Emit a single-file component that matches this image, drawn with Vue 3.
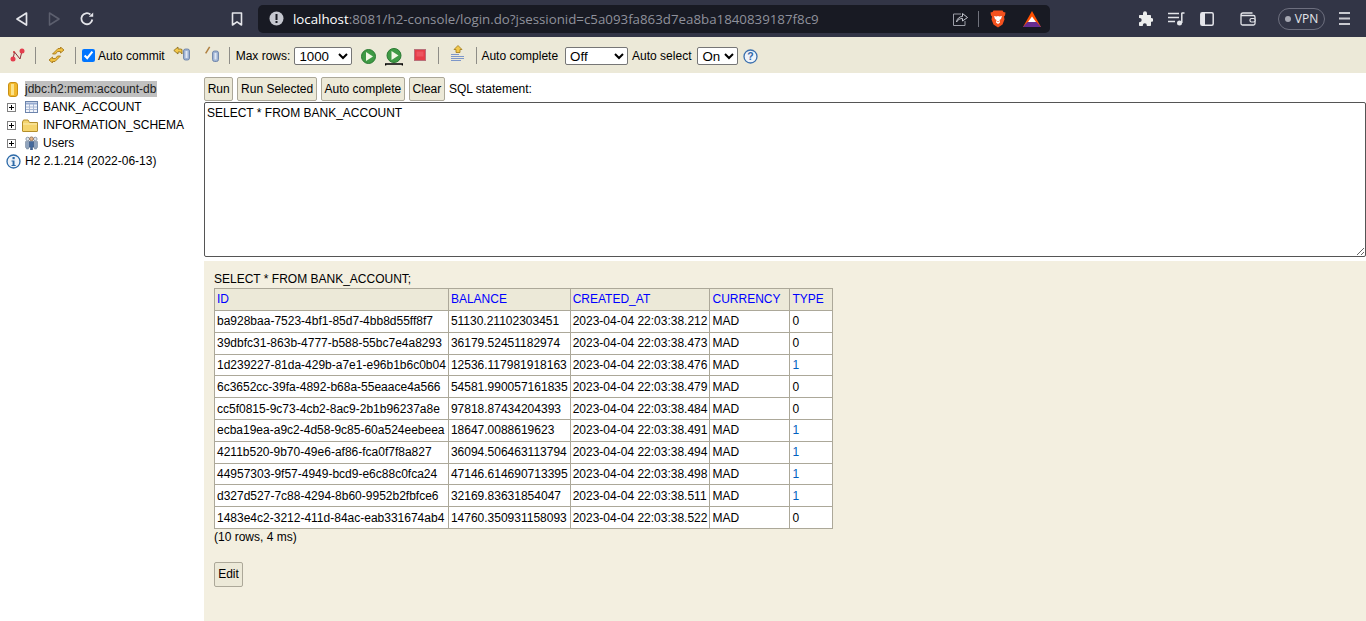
<script setup>
const rows = [
  ['ba928baa-7523-4bf1-85d7-4bb8d55ff8f7', '51130.21102303451', '2023-04-04 22:03:38.212', 'MAD', 0],
  ['39dbfc31-863b-4777-b588-55bc7e4a8293', '36179.52451182974', '2023-04-04 22:03:38.473', 'MAD', 0],
  ['1d239227-81da-429b-a7e1-e96b1b6c0b04', '12536.117981918163', '2023-04-04 22:03:38.476', 'MAD', 1],
  ['6c3652cc-39fa-4892-b68a-55eaace4a566', '54581.990057161835', '2023-04-04 22:03:38.479', 'MAD', 0],
  ['cc5f0815-9c73-4cb2-8ac9-2b1b96237a8e', '97818.87434204393', '2023-04-04 22:03:38.484', 'MAD', 0],
  ['ecba19ea-a9c2-4d58-9c85-60a524eebeea', '18647.0088619623', '2023-04-04 22:03:38.491', 'MAD', 1],
  ['4211b520-9b70-49e6-af86-fca0f7f8a827', '36094.506463113794', '2023-04-04 22:03:38.494', 'MAD', 1],
  ['44957303-9f57-4949-bcd9-e6c88c0fca24', '47146.614690713395', '2023-04-04 22:03:38.498', 'MAD', 1],
  ['d327d527-7c88-4294-8b60-9952b2fbfce6', '32169.83631854047', '2023-04-04 22:03:38.511', 'MAD', 1],
  ['1483e4c2-3212-411d-84ac-eab331674ab4', '14760.350931158093', '2023-04-04 22:03:38.522', 'MAD', 0],
]
const cols = ['ID', 'BALANCE', 'CREATED_AT', 'CURRENCY', 'TYPE']
</script>

<template>
  <div class="page">
    <header class="chrome">
      <svg class="i back" width="14" height="16" viewBox="0 0 14 16"><path d="M11.5 2 2 8l9.500 6z" fill="none" stroke="#e4e5ea" stroke-width="1.700" stroke-linejoin="round"/></svg>
      <svg class="i fwd" width="14" height="16" viewBox="0 0 14 16"><path d="M2.500 2 12 8l-9.500 6z" fill="none" stroke="#5c5f6e" stroke-width="1.500" stroke-linejoin="round"/></svg>
      <svg class="i reload" width="16" height="16" viewBox="0 0 16 16"><path d="M13.300 8.500A5.500 5.500 0 1 1 11.400 3.500" fill="none" stroke="#e4e5ea" stroke-width="1.800"/><path d="M9.800 5.800h4.400V1.400z" fill="#e4e5ea"/></svg>
      <svg class="i mark" width="12" height="14" viewBox="0 0 12 14"><path d="M1.500 1h9v12L6 9.800 1.500 13z" fill="none" stroke="#e4e5ea" stroke-width="1.600" stroke-linejoin="round"/></svg>
      <div class="url">
        <svg width="15" height="15" viewBox="0 0 15 15"><circle cx="7.500" cy="7.500" r="7" fill="#c5c7cf"/><rect x="6.500" y="3" width="2" height="6" fill="#181a23"/><rect x="6.500" y="10" width="2" height="2" fill="#181a23"/></svg>
        <span class="addr"><b>localhost</b>:8081/h2-console/login.do?jsessionid=c5a093fa863d7ea8ba1840839187f8c9</span>
        <svg class="share" width="16" height="16" viewBox="0 0 16 16"><path d="M9 3H1.500v11.500H13V10" fill="none" stroke="#9b9da7" stroke-width="1"/><path d="M4.500 11C5 7.500 7.500 5.500 10.500 5.500V2.500L15.500 6.500 10.500 10V7.500C8 7.500 6 8.500 4.500 11z" fill="#181a23" stroke="#c5c7cf" stroke-width="1" stroke-linejoin="round"/></svg>
        <i class="urlsep"></i>
        <svg class="brave" width="16" height="18" viewBox="0 0 16 18"><path d="M3.500.5h9l1 1.500 2 .5-.5 3-1 1 .5 3-2 5L8 17.500 3.500 14.500l-2-5 .5-3-1-1-.5-3 2-.5z" fill="#f4511e"/><path d="M4 6l2.500.5L8 6l1.500.5L12 6l-1 3-1.500 1L10 12.500 8 14 6 12.500 6.500 10 5 9z" fill="#fff"/><path d="M7 11h2l-1 1.200z" fill="#f4511e"/></svg>
        <svg class="bat" width="18" height="16" viewBox="0 0 18 16"><path d="M9 0 18 16H0z" fill="#ff5000"/><path d="M0 16 4.500 11H13.500L18 16z" fill="#662d91"/><path d="M9 5.500 13 11H5z" fill="#fff"/></svg>
      </div>
      <svg class="i puzzle" width="16" height="16" viewBox="0 0 16 16"><path d="M6 2.200a2 2 0 0 1 4 0V4h3.200a.8.800 0 0 1 .8.800V7h.3a1.900 1.900 0 0 1 0 3.800H14v3.400a.8.800 0 0 1-.8.800H9.800v-.8a2 2 0 0 0-4 0v.8H2.800a.8.800 0 0 1-.8-.8v-3h.6a2.100 2.100 0 0 0 0-4.200H2V4.800A.8.800 0 0 1 2.800 4H6z" fill="#eceded"/></svg>
      <svg class="i list" width="17" height="14" viewBox="0 0 17 14"><path d="M0 1.500h11M0 5.500h11M0 9.500h7" stroke="#e4e5ea" stroke-width="1.500"/><path d="M13.500 1h3M13.800 1v10" stroke="#e4e5ea" stroke-width="1.500" fill="none"/><circle cx="11.500" cy="11" r="2.500" fill="#e4e5ea"/></svg>
      <svg class="i side" width="14" height="14" viewBox="0 0 14 14"><rect x=".8" y=".8" width="12.400" height="12.400" rx="1.500" fill="none" stroke="#e4e5ea" stroke-width="1.500"/><rect x="1" y="1" width="4" height="12" fill="#e4e5ea"/></svg>
      <svg class="i wallet" width="16" height="14" viewBox="0 0 16 14"><path d="M1 3.500V11.500a1.500 1.500 0 0 0 1.500 1.500h11a1.500 1.500 0 0 0 1.500-1.500V5a1.500 1.500 0 0 0-1.500-1.500H1zM1 3a2 2 0 0 1 2-2h9.500" fill="none" stroke="#e4e5ea" stroke-width="1.300"/><rect x="10" y="6.500" width="5" height="3.500" rx="1.500" fill="#323546" stroke="#e4e5ea" stroke-width="1.200"/></svg>
      <div class="vpn"><i></i>VPN</div>
      <svg class="i menu" width="11" height="13" viewBox="0 0 11 13"><path d="M0 1h11M0 6.500h11M0 12h11" stroke="#c9cad0" stroke-width="2"/></svg>
    </header>

    <div class="toolbar">
      <svg class="ti disc" width="15" height="15" viewBox="0 0 15 15"><path d="M3 11 4.500 4 10 11l2-8" fill="none" stroke="#8c2c38" stroke-width="1"/><circle cx="3" cy="11" r="2.500" fill="#e43d4d"/><circle cx="12" cy="3" r="2.500" fill="#e43d4d"/><circle cx="4" cy="4" r="1" fill="#c33"/></svg>
      <i class="sep s1"></i>
      <svg class="ti refresh" width="15" height="16" viewBox="0 0 15 16"><path d="M9 1.500h2.500V0L15 3 11.500 6V4.500H8.500L6.500 7H3.500z" fill="#f0c040" stroke="#a07010" stroke-width=".8"/><path d="M6 14.500H3.500V16L0 13l3.500-3v1.500h3L8.500 9h3z" fill="#f0c040" stroke="#a07010" stroke-width=".8"/></svg>
      <i class="sep s2"></i>
      <input class="chk" type="checkbox" checked />
      <span class="lbl ac">Auto commit</span>
      <svg class="ti rb" width="17" height="15" viewBox="0 0 17 15"><path d="M5 1 .8 4.500 5 8V6h2.500l1.500 2V3.500L7.500 3H5z" fill="#f3c84b" stroke="#8a6a14" stroke-width=".8"/><rect x="10.500" y="3" width="6" height="11" rx="2" fill="#9eb3d3" stroke="#5f79a3" stroke-width=".8"/><rect x="12.500" y="5" width="2" height="7" fill="#dfe7f3"/></svg>
      <svg class="ti cm" width="15" height="16" viewBox="0 0 15 16"><path d="M1 7 5 .5l1.300.8-4 6.500z" fill="#b08040"/><rect x="8.500" y="5" width="6" height="10.500" rx="2" fill="#9eb3d3" stroke="#5f79a3" stroke-width=".8"/><rect x="10.500" y="7" width="2" height="6.500" fill="#dfe7f3"/></svg>
      <i class="sep s3"></i>
      <span class="lbl mr">Max rows:</span>
      <select class="sel mrs"><option>1000</option></select>
      <svg class="ti run1" width="15" height="15" viewBox="0 0 15 15"><circle cx="7.500" cy="7.500" r="7" fill="#3f9a45" stroke="#2a7a33"/><path d="M5 3 12 7.500 5 12z" fill="#f3f8e6"/></svg>
      <svg class="ti run2" width="18" height="18" viewBox="0 0 18 18"><circle cx="9" cy="7.500" r="7" fill="#3f9a45" stroke="#2a7a33"/><path d="M6.500 3 13.500 7.500 6.500 12z" fill="#f3f8e6"/><path d="M.5 17.500v-1.500h17v1.500" fill="none" stroke="#000" stroke-width="1.500"/></svg>
      <svg class="ti stop" width="12" height="12" viewBox="0 0 12 12"><rect x=".5" y=".5" width="11" height="11" fill="#e63d48" stroke="#b9707a"/><rect x="2.500" y="2.500" width="7" height="5" fill="#ee5560"/></svg>
      <i class="sep s4"></i>
      <svg class="ti hist" width="14" height="18" viewBox="0 0 14 18"><path d="M7 .5 11 4.500H9V7.500H5V4.500H3z" fill="#f3c84b" stroke="#a07a18" stroke-width=".8"/><path d="M0 9.500h8M0 11.500h13M0 13.500h13M0 15.500h10" stroke="#7d97c9" stroke-width="1"/></svg>
      <i class="sep s5"></i>
      <span class="lbl acl">Auto complete</span>
      <select class="sel acs"><option>Off</option></select>
      <span class="lbl asl">Auto select</span>
      <select class="sel ass"><option>On</option></select>
      <svg class="ti help" width="15" height="15" viewBox="0 0 15 15"><circle cx="7.500" cy="7.500" r="6.500" fill="#eef3f9" stroke="#3b70ae" stroke-width="1.300"/><text x="7.500" y="11.200" text-anchor="middle" font-family="Liberation Sans" font-weight="700" font-size="10.500" fill="#2f66a8">?</text></svg>
    </div>

    <div class="body">
      <aside class="tree">
        <div class="node first">
          <svg class="db" width="10" height="15" viewBox="0 0 10 15"><rect x=".5" y=".5" width="9" height="14" rx="2.500" fill="#f1b82d" stroke="#c88f14"/><rect x="3" y="2" width="3" height="11" fill="#fbe28a"/></svg>
          <span class="sel-text">jdbc:h2:mem:account-db</span>
        </div>
        <div class="node">
          <i class="plus"></i>
          <svg class="ico" width="13" height="12" viewBox="0 0 13 12"><rect x=".5" y=".5" width="12" height="11" fill="#f2f5fb" stroke="#6c84ac"/><path d="M1 2.500h11" stroke="#97abd0" stroke-width="2"/><path d="M1 6h11M1 8.500h11M4.500 3v8M8.500 3v8" stroke="#a6b6d3"/></svg>
          <span class="t1">BANK_ACCOUNT</span>
        </div>
        <div class="node">
          <i class="plus"></i>
          <svg class="ico fold" width="16" height="13" viewBox="0 0 16 13"><path d="M.5 3V12a.5.500 0 0 0 .5.500h14a.5.500 0 0 0 .5-.5V3.500h-8L6 1H1.500z" fill="#f5d56e" stroke="#b48f2c"/><path d="M1 5h14" stroke="#fbeeb4"/></svg>
          <span class="t2">INFORMATION_SCHEMA</span>
        </div>
        <div class="node">
          <i class="plus"></i>
          <svg class="ico" width="13" height="14" viewBox="0 0 13 14"><circle cx="2.700" cy="3" r="1.800" fill="#dfe5ee" stroke="#66788f" stroke-width=".7"/><circle cx="10.300" cy="3" r="1.800" fill="#dfe5ee" stroke="#66788f" stroke-width=".7"/><path d="M.5 5.500h4v6h-1v1.500h-2v-1.500h-1zM8.500 5.500h4v6h-1v1.500h-2v-1.500h-1z" fill="#8fa3bd" stroke="#66788f" stroke-width=".5"/><circle cx="6.500" cy="2.800" r="1.900" fill="#e2b58c" stroke="#7d5a3c" stroke-width=".7"/><path d="M4.500 5.500h4V11H7.500v3h-2v-3h-1z" fill="#44699c" stroke="#2d4a74" stroke-width=".5"/></svg>
          <span class="t1">Users</span>
        </div>
        <div class="node info">
          <svg width="15" height="15" viewBox="0 0 15 15"><circle cx="7.500" cy="7.500" r="6.500" fill="#eef3f9" stroke="#2d6aa8" stroke-width="1.300"/><rect x="6.500" y="3" width="2.200" height="2.200" fill="#2d6aa8"/><path d="M5.500 6.500h3V11h1.200v1h-4.200v-1h1.100V7.500H5.500z" fill="#2d6aa8"/></svg>
          <span>H2 2.1.214 (2022-06-13)</span>
        </div>
      </aside>

      <main class="main">
        <section class="query">
          <div class="btns">
            <button class="btn">Run</button>
            <button class="btn">Run Selected</button>
            <button class="btn">Auto complete</button>
            <button class="btn">Clear</button>
            <span>SQL statement:</span>
          </div>
          <textarea class="sql" spellcheck="false">SELECT * FROM BANK_ACCOUNT</textarea>
        </section>
        <section class="result">
          <div class="stmt">SELECT * FROM BANK_ACCOUNT;</div>
          <table>
            <thead>
              <tr><th v-for="c in cols" :key="c"><a>{{ c }}</a></th></tr>
            </thead>
            <tbody>
              <tr v-for="r in rows" :key="r[0]">
                <td>{{ r[0] }}</td>
                <td>{{ r[1] }}</td>
                <td>{{ r[2] }}</td>
                <td>{{ r[3] }}</td>
                <td :class="{ link: r[4] === 1 }">{{ r[4] }}</td>
              </tr>
            </tbody>
          </table>
          <div class="meta">(10 rows, 4 ms)</div>
          <button class="btn edit">Edit</button>
        </section>
      </main>
    </div>
  </div>
</template>

<style>
html, body { margin: 0; padding: 0; overflow: hidden; }
</style>

<style scoped>
.page { width: 1366px; height: 621px; display: flex; flex-direction: column; font-family: "Liberation Sans", Arial, sans-serif; font-size: 12px; color: #000; background: #fff; overflow: hidden; }

.chrome { height: 37px; background: #323546; display: flex; align-items: center; flex: none; }
.chrome svg { flex: none; }
.i.back { margin-left: 15px; }
.i.fwd { margin-left: 18px; }
.i.reload { margin-left: 18px; }
.i.mark { margin-left: 136px; }
.url { margin-left: 15px; width: 792px; height: 28px; background: #181a23; border-radius: 5px; display: flex; align-items: center; padding-left: 11px; box-sizing: border-box; }
.addr { margin-left: 9px; width: 659px; flex: none; font-family: "Open Sans", sans-serif; font-size: 13.300px; color: #8f919b; white-space: nowrap; }
.addr b { font-weight: 400; color: #fff; }
.urlsep { width: 1px; height: 16px; background: #70727c; margin-left: 10px; }
.brave { margin-left: 11px; }
.bat { margin-left: 17px; }
.i.puzzle { margin-left: 87px; }
.i.list { margin-left: 15px; }
.i.side { margin-left: 15px; }
.i.wallet { margin-left: 26px; }
.vpn { margin-left: 22px; width: 47px; height: 22px; box-sizing: border-box; border: 1px solid #6d6f7e; border-radius: 11px; display: flex; align-items: center; justify-content: center; gap: 4px; color: #e4e5ea; font-family: "Open Sans", sans-serif; font-size: 12px; }
.vpn i { width: 6px; height: 6px; border-radius: 50%; background: #a6a8b3; }
.i.menu { margin-left: 14px; }

.toolbar { height: 36px; background: #ece9d8; display: flex; align-items: center; flex: none; }
.ti { flex: none; }
.disc { margin-left: 10px; }
.sep { flex: none; width: 1px; height: 17px; background: #8e8d87; }
.s1 { margin-left: 10px; }
.refresh { margin-left: 13px; }
.s2 { margin-left: 11px; }
.chk { margin: 0 0 0 6px; width: 13px; height: 13px; flex: none; }
.lbl { flex: none; white-space: nowrap; margin-top: 2px; }
.ac { margin-left: 3px; }
.rb { margin-left: 8px; margin-top: -3px; }
.cm { margin-left: 14px; margin-top: -3px; }
.s3 { margin-left: 10px; }
.mr { margin-left: 6px; }
.sel { flex: none; height: 18px; margin-top: 2px; box-sizing: border-box; font-family: "Liberation Sans", Arial, sans-serif; font-size: 13.333px; background: #fff; border: 1px solid #767676; border-radius: 2px; padding: 0; }
.mrs { margin-left: 4px; width: 58px; }
.run1 { margin-left: 9px; margin-top: 2px; }
.run2 { margin-left: 9px; margin-top: 4px; }
.stop { margin-left: 11px; margin-top: -1px; }
.s4 { margin-left: 12px; }
.hist { margin-left: 12px; margin-top: -2px; }
.s5 { margin-left: 11px; }
.acl { margin-left: 4px; }
.acs { margin-left: 7px; width: 63px; }
.asl { margin-left: 4px; }
.ass { margin-left: 6px; width: 41px; }
.help { margin-left: 5px; margin-top: 2px; }

.body { flex: 1; display: flex; min-height: 0; }
.tree { width: 204px; flex: none; padding-top: 7px; box-sizing: border-box; }
.node { height: 18px; display: flex; align-items: center; white-space: nowrap; padding-left: 7px; }
.node.first { padding-left: 8px; }
.db { flex: none; }
.sel-text { margin-left: 7px; background: #c0c0c0; padding: 1px 0; line-height: 14px; width: 132px; color: #222; }
.plus { flex: none; width: 9px; height: 9px; box-sizing: border-box; border: 1px solid #808080; background: linear-gradient(#000, #000) center / 5px 1px no-repeat, linear-gradient(#000, #000) center / 1px 5px no-repeat, #fff; }
.ico { margin-left: 9px; flex: none; }
.ico.fold { margin-left: 6px; }
.t1 { margin-left: 5px; }
.t2 { margin-left: 5px; }
.node.info { padding-left: 6px; }
.node.info span { margin-left: 4px; }

.main { flex: 1; min-width: 0; display: flex; flex-direction: column; }
.query { height: 188px; flex: none; box-sizing: border-box; padding-top: 4px; }
.btns { height: 24px; display: flex; align-items: center; gap: 4px; margin-bottom: 1px; }
.btn { height: 24px; box-sizing: border-box; background: #ece9d8; border: 1px solid #aca899; border-radius: 2px; padding: 0 2.700px; font-family: "Liberation Sans", Arial, sans-serif; font-size: 12px; color: #000; }
.sql { display: block; width: 100%; height: 155px; box-sizing: border-box; margin: 0; padding: 3px 2px; font-family: "Liberation Sans", Arial, sans-serif; font-size: 12px; line-height: 14px; border: 1px solid #555; border-radius: 2px; outline: none; }
.result { flex: 1; background: #f3efe0; padding: 11px 0 0 10px; min-height: 0; }
.stmt { line-height: 14px; height: 16px; }
table { border-collapse: collapse; background: #fff; }
th, td { border: 1px solid #aca899; padding: 0 2px; height: 20.800px; font-weight: 400; text-align: left; white-space: nowrap; }
th { background: #ece9d8; height: 22px; padding-bottom: 2px; box-sizing: border-box; }
th:nth-child(4) { padding-right: 9px; }
th:nth-child(5) { padding-right: 8px; }
th a { color: #0000ff; }
td.link { color: #0060c0; }
.meta { margin-top: 1px; line-height: 14px; }
.edit { display: block; margin-top: 18px; width: 29px; height: 25px; padding: 0; }
</style>
